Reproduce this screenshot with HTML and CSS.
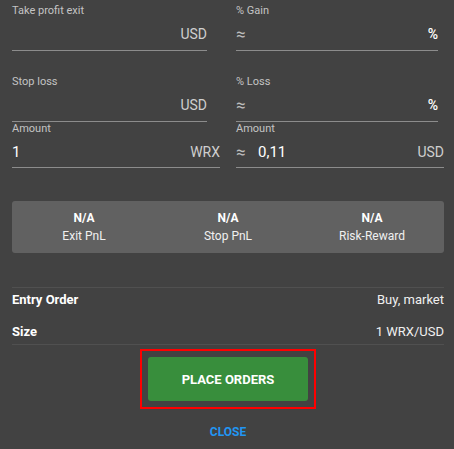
FILE: index.html
```html
<!DOCTYPE html>
<html lang="en">
<head>
    <meta charset="UTF-8">
    <title>Order Form</title>
    <link rel="stylesheet" href="styles.css">
</head>
<body>
    <div class="form-grid">
        <div class="field short-left spaced">
            <div class="field-label">Take profit exit</div>
            <div class="field-input"><span class="value"></span><span class="unit">USD</span></div>
        </div>
        <div class="field short-right spaced">
            <div class="field-label">% Gain</div>
            <div class="field-input"><span class="approx">&asymp;</span><span class="value"></span><span class="unit pct">%</span></div>
        </div>
        <div class="field short-left">
            <div class="field-label">Stop loss</div>
            <div class="field-input"><span class="value"></span><span class="unit">USD</span></div>
        </div>
        <div class="field short-right">
            <div class="field-label">% Loss</div>
            <div class="field-input"><span class="approx">&asymp;</span><span class="value"></span><span class="unit pct">%</span></div>
        </div>
        <div class="field tight">
            <div class="field-label">Amount</div>
            <div class="field-input"><span class="value">1</span><span class="unit">WRX</span></div>
        </div>
        <div class="field tight">
            <div class="field-label">Amount</div>
            <div class="field-input"><span class="approx">&asymp;</span><span class="value">0,11</span><span class="unit">USD</span></div>
        </div>
    </div>

    <div class="stats-panel">
        <div class="stat">
            <div class="stat-value">N/A</div>
            <div class="stat-label">Exit PnL</div>
        </div>
        <div class="stat">
            <div class="stat-value">N/A</div>
            <div class="stat-label">Stop PnL</div>
        </div>
        <div class="stat">
            <div class="stat-value">N/A</div>
            <div class="stat-label">Risk-Reward</div>
        </div>
    </div>

    <div class="summary">
        <div class="summary-row">
            <span class="summary-key">Entry Order</span>
            <span class="summary-val">Buy, market</span>
        </div>
        <div class="summary-row">
            <span class="summary-key">Size</span>
            <span class="summary-val">1 WRX/USD</span>
        </div>
    </div>

    <div class="actions">
        <div class="highlight">
            <button class="place-btn">PLACE ORDERS</button>
        </div>
        <button class="close-btn">CLOSE</button>
    </div>
</body>
</html>
```

FILE: styles.css
```css
body {
    background-color: #424242;
    color: #ffffff;
    font-family: 'Roboto', 'Liberation Sans', sans-serif;
    margin: 0;
    padding: 4px 10px 0 12px;
}

.form-grid {
    display: grid;
    grid-template-columns: 1fr 1fr;
    column-gap: 16px;
}

.field.spaced {
    margin-bottom: 24px;
}

.field.short-left {
    margin-right: 13px;
}

.field.short-right {
    margin-right: 6px;
}

.field-label {
    font-size: 11px;
    line-height: 14px;
    height: 14px;
    color: #c4c4c4;
}

.field-input {
    display: flex;
    align-items: center;
    height: 32px;
    border-bottom: 1px solid #8c8c8c;
}

.field.tight .field-input {
    height: 31px;
}

.approx {
    font-size: 17px;
    color: #bdbdbd;
    width: 22px;
}

.value {
    flex: 1;
    font-size: 15px;
    color: #ffffff;
}

.unit {
    font-size: 14px;
    color: #cfcfcf;
}

.unit.pct {
    font-size: 14px;
    font-weight: 500;
    color: #ffffff;
}

.stats-panel {
    display: flex;
    margin-top: 33px;
    height: 52px;
    padding-top: 10px;
    box-sizing: border-box;
    background-color: #616161;
    border-radius: 3px;
}

.stat {
    flex: 1;
    text-align: center;
}

.stat-value {
    font-size: 12px;
    font-weight: bold;
    line-height: 14px;
}

.stat-label {
    font-size: 12px;
    line-height: 22px;
    color: #f0f0f0;
}

.summary {
    margin-top: 34px;
    border-top: 1px solid #505050;
    border-bottom: 1px solid #505050;
    display: flex;
    flex-direction: column;
    gap: 8px;
}

.summary-row {
    display: flex;
    justify-content: space-between;
    line-height: 24px;
    font-size: 13px;
}

.summary-key {
    font-weight: bold;
}

.summary-val {
    color: #f0f0f0;
}

.actions {
    display: flex;
    flex-direction: column;
    align-items: center;
    margin-top: 4px;
}

.highlight {
    border: 2px solid #ff0000;
    padding: 6px;
}

.place-btn {
    display: block;
    width: 160px;
    height: 44px;
    border: none;
    border-radius: 3px;
    background-color: #388e3c;
    color: #ffffff;
    font-family: 'Roboto', 'Liberation Sans', sans-serif;
    font-size: 13px;
    font-weight: bold;
}

.close-btn {
    margin-top: 16px;
    background: none;
    border: none;
    color: #2196f3;
    font-family: 'Roboto', 'Liberation Sans', sans-serif;
    font-size: 12px;
    font-weight: bold;
    padding: 0;
}
```
